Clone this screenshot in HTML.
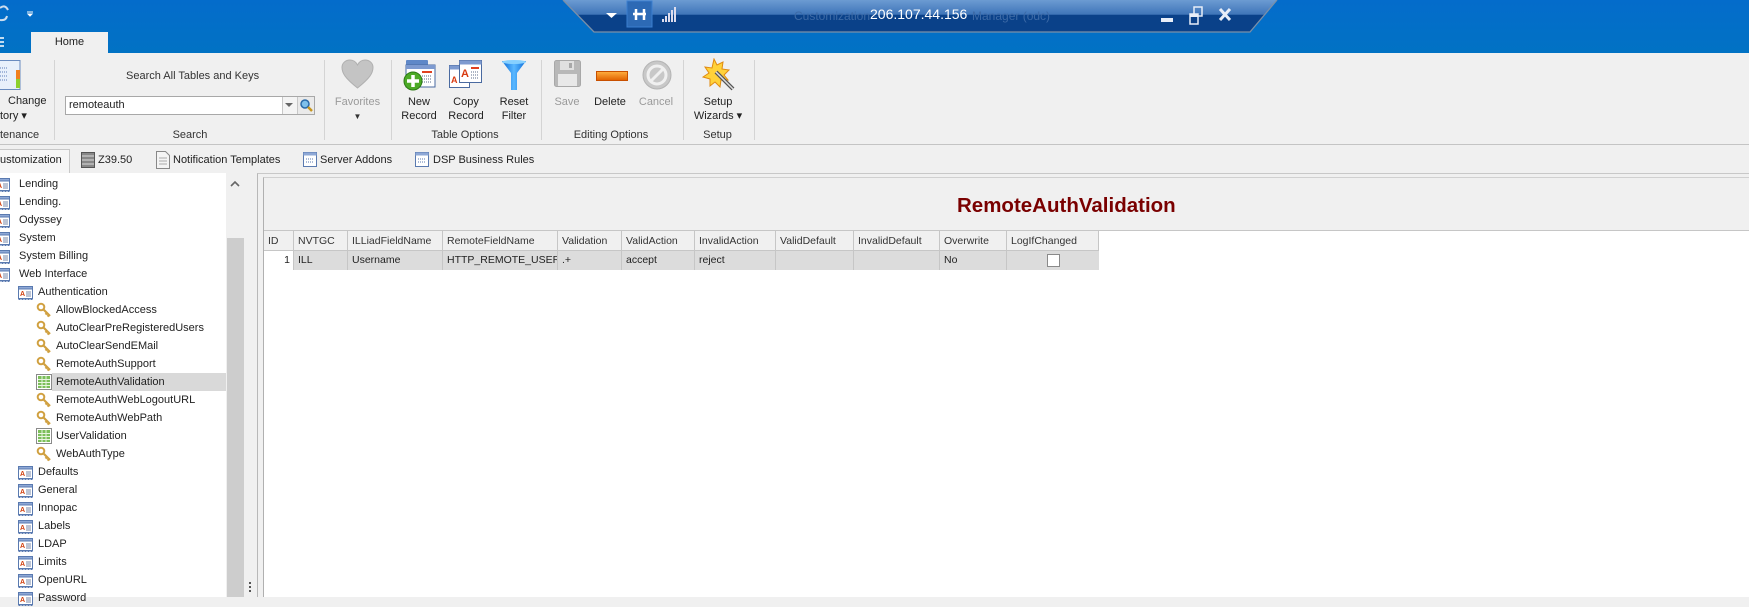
<!DOCTYPE html>
<html><head><meta charset="utf-8">
<style>
*{margin:0;padding:0;box-sizing:border-box}
body{width:1749px;height:597px;overflow:hidden;background:#f0f0f0;font-family:"Liberation Sans",Tahoma,sans-serif;font-size:11px;color:#222;position:relative}
.a{position:absolute;white-space:nowrap}
.sep{position:absolute;top:60px;width:1px;height:80px;background:#d4d4d4}
.gl{position:absolute;top:129px;font-size:11px;color:#333;text-align:center;white-space:nowrap}
.bt{position:absolute;top:95px;font-size:11px;line-height:14px;text-align:center;color:#222;white-space:nowrap}
.tr{position:absolute;height:18px;line-height:18px;font-size:11px;color:#222;white-space:nowrap;width:260px}
.tr svg{position:absolute;left:0;top:1px}
.tr span{position:absolute;top:0;white-space:nowrap}
.gh,.gr{position:absolute;height:20px;line-height:20px;font-size:10.5px;padding-left:4px;border-right:1px solid #c6c6c6;white-space:nowrap;overflow:hidden}
.gh{top:231px;background:#f0f0f0;border-bottom:1px solid #c6c6c6;color:#333}
.gr{top:251px;height:19px;line-height:19px;background:#dcdcdc;color:#222}
</style></head><body>
<svg width="0" height="0" style="position:absolute">
<defs>
<g id="fold">
<rect x="1.5" y="2.5" width="14" height="12" fill="#fff" stroke="#5a7ab0"/>
<rect x="1.5" y="2.5" width="14" height="2.5" fill="#8ea8d6" stroke="#5a7ab0"/>
<text x="3" y="12" font-size="7" font-family="Liberation Sans" font-weight="bold" fill="#d04010">A</text>
<path d="M9 8h5M9 10h5M9 12h5" stroke="#7a8aa8" stroke-width="1"/>
<path d="M1.5 15.5h14" stroke="#5a7ab0" stroke-dasharray="2 1"/>
</g>
<g id="key">
<circle cx="5" cy="5" r="3.3" fill="none" stroke="#d0a040" stroke-width="2"/>
<path d="M7.5 7.5L14 14M11 11l-1.5 1.5M13 13l-1.5 1.5" stroke="#d0a040" stroke-width="2.2" fill="none"/>
</g>
<g id="tbl">
<rect x="0.5" y="0.5" width="15" height="15" fill="#fff" stroke="#8a8a8a"/>
<rect x="2" y="2" width="12" height="12" fill="#7cbf5a"/>
<path d="M2 5.5h12M2 8.5h12M2 11.5h12M6 2v12M10 2v12" stroke="#e9f5e0" stroke-width="1"/>
</g>
</defs>
</svg>

<div class="a" style="left:0;top:0;width:1749px;height:53px;background:linear-gradient(#046ccb,#0172c4)"></div>
<svg class="a" style="left:0;top:0" width="1749" height="53">
<defs><linearGradient id="band" x1="0" y1="0" x2="0" y2="1"><stop offset="0" stop-color="#6c9bd2"/><stop offset="0.45" stop-color="#3f75b9"/><stop offset="0.47" stop-color="#0a4189"/><stop offset="1" stop-color="#0a4189"/></linearGradient></defs>
<path d="M563 0L594 32H1250L1277 0Z" fill="url(#band)"/>
<path d="M563 0L594 32H1250L1277 0" fill="none" stroke="#7a8fa8" stroke-width="1.3"/>
<path d="M606 13h11l-5.5 5z" fill="#fff"/>
<rect x="627" y="1" width="25" height="26" fill="#2d6ab5" stroke="#3b7fd0"/>
<path d="M633 14h13M636 9v11M644 9v11" stroke="#fff" stroke-width="2.5"/>
<g fill="#dde">
<rect x="662" y="19" width="2" height="3"/><rect x="665" y="16" width="2" height="6"/><rect x="668" y="13" width="2" height="9"/><rect x="671" y="10" width="2" height="12"/><rect x="674" y="7" width="2" height="15"/>
</g>
<rect x="1161" y="18" width="12" height="4" fill="#e8eef8"/>
<rect x="1190" y="14" width="8" height="10" fill="none" stroke="#e8eef8" stroke-width="1.5"/>
<rect x="1194" y="7" width="8" height="9" fill="none" stroke="#e8eef8" stroke-width="1.5"/>
<rect x="1190" y="14" width="8" height="3" fill="#e8eef8"/>
<path d="M1220 9l10 11M1230 9l-10 11" stroke="#e8eef8" stroke-width="3"/>
<path d="M0 8q5-4 8 2M0 20q6 1 7-4" stroke="#cde" stroke-width="2" fill="none"/>
<path d="M27 12h6M28 14h4l-2 2z" fill="#fff" stroke="#fff" stroke-width="1"/>
<path d="M0 38h4M0 42h4M0 46h4" stroke="#fff" stroke-width="1.6"/>
</svg>
<div class="a" style="left:794px;top:9px;font-size:12px;color:#3d6aa6">Customization -</div>
<div class="a" style="left:870px;top:6px;font-size:14px;color:#fff">206.107.44.156</div>
<div class="a" style="left:972px;top:9px;font-size:12px;color:#3d6aa6">Manager (odc)</div>
<div class="a" style="left:31px;top:32px;width:77px;height:21px;background:#f0f0f0;font-size:11px;line-height:21px;text-align:center;color:#222">Home</div>

<div class="a" style="left:0;top:144px;width:1749px;height:1px;background:#c4c4c4"></div>
<svg class="a" style="left:0;top:60px" width="25" height="30">
<rect x="-4" y="0.5" width="24" height="29" fill="#e8f0fb" stroke="#6a8cc0"/>
<path d="M0 8h8M0 12h8M0 16h8M0 20h8" stroke="#5c7cb8" stroke-dasharray="1 1"/>
<rect x="16" y="10" width="4" height="9" fill="#f08020"/><rect x="16" y="19" width="4" height="9" fill="#8cd030"/>
</svg>
<div class="a" style="left:8px;top:95px;font-size:11px">Change</div>
<div class="a" style="left:0;top:109px;font-size:11px">tory ▾</div>
<div class="gl" style="left:0">tenance</div>
<div class="sep" style="left:54px"></div>
<div class="a" style="left:126px;top:70px;color:#333">Search All Tables and Keys</div>
<div class="a" style="left:65px;top:96px;width:250px;height:19px;background:#fff;border:1px solid #a8a8a8"></div>
<div class="a" style="left:69px;top:99px;font-size:11px;color:#222">remoteauth</div>
<div class="a" style="left:282px;top:97px;width:15px;height:17px;background:#f4f4f4;border-left:1px solid #c8c8c8"></div>
<svg class="a" style="left:285px;top:103px" width="9" height="5"><path d="M0 0h8l-4 4z" fill="#666"/></svg>
<div class="a" style="left:297px;top:97px;width:17px;height:17px;background:#eaeaea;border-left:1px solid #c8c8c8"></div>
<svg class="a" style="left:299px;top:98px" width="15" height="15"><circle cx="6" cy="6" r="4" fill="#7fc0ea" stroke="#2a6aa8" stroke-width="1.5"/><path d="M9 9l4 4" stroke="#c8961e" stroke-width="2.5"/></svg>
<div class="gl" style="left:170px;width:40px">Search</div>
<div class="sep" style="left:324px"></div>
<svg class="a" style="left:341px;top:59px" width="33" height="31"><path d="M16.5 29C4 19 1 14 1 8.5 1 4 4.5 1 9 1c3.5 0 6 2 7.5 5C18 3 20.5 1 24 1c4.5 0 8 3 8 7.5 0 5.5-3 10.5-15.5 20.5z" fill="#c4c4c4" stroke="#b0b0b0"/></svg>
<div class="bt" style="left:330px;width:55px;color:#9a9a9a">Favorites<br><span style="font-size:8px;color:#333">▼</span></div>
<div class="sep" style="left:391px"></div>
<svg class="a" style="left:402px;top:59px" width="34" height="32">
<rect x="4" y="1" width="22" height="8" rx="1" fill="#5f88c8"/>
<rect x="4" y="6" width="29" height="22" fill="#fff" stroke="#4a6aa0"/>
<rect x="4" y="6" width="29" height="4" fill="#7d9ad0"/>
<rect x="20" y="12" width="10" height="2" fill="#e04020"/>
<path d="M20 17h10M20 20h10M20 23h10" stroke="#5a6a88" stroke-dasharray="1 1"/>
<circle cx="11" cy="22" r="9" fill="#4caa26" stroke="#2d7a14"/>
<path d="M11 16v12M5 22h12" stroke="#fff" stroke-width="3.5"/>
</svg>
<div class="bt" style="left:397px;width:44px">New<br>Record</div>
<svg class="a" style="left:449px;top:59px" width="34" height="32">
<rect x="0.5" y="6.5" width="20" height="22" fill="#fff" stroke="#4a6aa0"/>
<rect x="0.5" y="6.5" width="20" height="4" fill="#7d9ad0"/>
<rect x="10.5" y="1.5" width="22" height="22" fill="#fff" stroke="#4a6aa0"/>
<rect x="10.5" y="1.5" width="22" height="4" fill="#7d9ad0"/>
<text x="12" y="18" font-size="11" font-weight="bold" font-family="Liberation Sans" fill="#d83a10">A</text>
<text x="2" y="24" font-size="9" font-weight="bold" font-family="Liberation Sans" fill="#d83a10">A</text>
<rect x="22" y="8" width="8" height="2" fill="#e04020"/>
<path d="M22 13h8M22 16h8M22 19h8" stroke="#5a6a88" stroke-dasharray="1 1"/>
</svg>
<div class="bt" style="left:444px;width:44px">Copy<br>Record</div>
<svg class="a" style="left:501px;top:59px" width="26" height="32"><defs><linearGradient id="fn" x1="0" x2="1"><stop offset="0" stop-color="#0a6ad8"/><stop offset="0.5" stop-color="#5ab8ff"/><stop offset="1" stop-color="#0a6ad8"/></linearGradient></defs><path d="M1 2h24L16 14v17h-6V14z" fill="url(#fn)"/><ellipse cx="13" cy="3" rx="12" ry="2" fill="#86d0ff"/></svg>
<div class="bt" style="left:492px;width:44px">Reset<br>Filter</div>
<div class="gl" style="left:430px;width:70px">Table Options</div>
<div class="sep" style="left:541px"></div>
<svg class="a" style="left:554px;top:60px" width="27" height="28"><rect x="0.5" y="0.5" width="26" height="26" rx="2" fill="#b8b8b8" stroke="#a8a8a8"/><rect x="6" y="1" width="14" height="9" fill="#e0e0e0"/><rect x="15" y="3" width="3" height="5" fill="#a8a8a8"/><rect x="4" y="14" width="19" height="12" fill="#e8e8e8"/></svg>
<div class="bt" style="left:545px;width:44px;color:#9a9a9a">Save</div>
<svg class="a" style="left:596px;top:71px" width="32" height="10"><defs><linearGradient id="dl" x1="0" y1="0" x2="0" y2="1"><stop offset="0" stop-color="#ffb040"/><stop offset="1" stop-color="#e06000"/></linearGradient></defs><rect x="0.5" y="0.5" width="31" height="9" fill="url(#dl)" stroke="#c85000"/></svg>
<div class="bt" style="left:588px;width:44px">Delete</div>
<svg class="a" style="left:641px;top:59px" width="32" height="32"><circle cx="16" cy="16" r="14" fill="#c8c8c8" stroke="#b4b4b4"/><circle cx="16" cy="16" r="9" fill="none" stroke="#f0f0f0" stroke-width="3"/><path d="M10 22L22 10" stroke="#f0f0f0" stroke-width="3"/></svg>
<div class="bt" style="left:633px;width:46px;color:#9a9a9a">Cancel</div>
<div class="gl" style="left:571px;width:80px">Editing Options</div>
<div class="sep" style="left:683px"></div>
<svg class="a" style="left:702px;top:58px" width="34" height="34"><path d="M12 1l3 6 6-3-1 7 7 1-5 5 4 5-7 0-1 7-5-5-5 4 0-7-7-2 6-4-4-6 7 1z" fill="#ffd23a" stroke="#e08a10"/><path d="M14 14L31 31" stroke="#555" stroke-width="4"/><path d="M14 14L31 31" stroke="#ddd" stroke-width="1.5"/></svg>
<div class="bt" style="left:690px;width:56px">Setup<br>Wizards ▾</div>
<div class="gl" style="left:700px;width:35px">Setup</div>
<div class="sep" style="left:754px"></div>

<div class="a" style="left:0;top:149px;width:70px;height:25px;background:#f6f6f6;border:1px solid #c8c8c8;border-left:none;border-bottom:none"></div>
<div class="a" style="left:0;top:154px">ustomization</div>
<svg class="a" style="left:81px;top:152px" width="14" height="16"><rect x="0.5" y="0.5" width="13" height="15" fill="#888" stroke="#555"/><path d="M1 4h12M1 8h12M1 12h12" stroke="#ddd"/></svg>
<div class="a" style="left:98px;top:154px">Z39.50</div>
<svg class="a" style="left:156px;top:151px" width="14" height="18"><path d="M0.5 0.5h9l4 4v13h-13z" fill="#f4f4f4" stroke="#888"/><path d="M3 7h8M3 10h8M3 13h8" stroke="#aaa"/></svg>
<div class="a" style="left:173px;top:154px">Notification Templates</div>
<svg class="a" style="left:302px;top:151px" width="16" height="17"><rect x="1.5" y="1.5" width="13" height="14" fill="#fff" stroke="#5a7ab0"/><rect x="1.5" y="1.5" width="13" height="3" fill="#8ea8d6"/><path d="M4 8h8M4 11h8" stroke="#5a7ab0" stroke-dasharray="1 1"/></svg>
<div class="a" style="left:320px;top:154px">Server Addons</div>
<svg class="a" style="left:414px;top:151px" width="16" height="17"><rect x="1.5" y="1.5" width="13" height="14" fill="#fff" stroke="#5a7ab0"/><rect x="1.5" y="1.5" width="13" height="3" fill="#8ea8d6"/><path d="M4 8h8M4 11h8" stroke="#5a7ab0" stroke-dasharray="1 1"/></svg>
<div class="a" style="left:433px;top:154px">DSP Business Rules</div>

<div class="a" style="left:0;top:173px;width:226px;height:424px;background:#fff"></div>
<div class="a" style="left:52px;top:373px;width:174px;height:18px;background:#d9d9d9"></div>
<div class="tr" style="left:-6px;top:175px"><svg width="17" height="17"><use href="#fold"/></svg><span style="left:25px">Lending</span></div>
<div class="tr" style="left:-6px;top:193px"><svg width="17" height="17"><use href="#fold"/></svg><span style="left:25px">Lending.</span></div>
<div class="tr" style="left:-6px;top:211px"><svg width="17" height="17"><use href="#fold"/></svg><span style="left:25px">Odyssey</span></div>
<div class="tr" style="left:-6px;top:229px"><svg width="17" height="17"><use href="#fold"/></svg><span style="left:25px">System</span></div>
<div class="tr" style="left:-6px;top:247px"><svg width="17" height="17"><use href="#fold"/></svg><span style="left:25px">System Billing</span></div>
<div class="tr" style="left:-6px;top:265px"><svg width="17" height="17"><use href="#fold"/></svg><span style="left:25px">Web Interface</span></div>
<div class="tr" style="left:17px;top:283px"><svg width="17" height="17"><use href="#fold"/></svg><span style="left:21px">Authentication</span></div>
<div class="tr" style="left:36px;top:301px"><svg width="17" height="17"><use href="#key"/></svg><span style="left:20px">AllowBlockedAccess</span></div>
<div class="tr" style="left:36px;top:319px"><svg width="17" height="17"><use href="#key"/></svg><span style="left:20px">AutoClearPreRegisteredUsers</span></div>
<div class="tr" style="left:36px;top:337px"><svg width="17" height="17"><use href="#key"/></svg><span style="left:20px">AutoClearSendEMail</span></div>
<div class="tr" style="left:36px;top:355px"><svg width="17" height="17"><use href="#key"/></svg><span style="left:20px">RemoteAuthSupport</span></div>
<div class="tr" style="left:36px;top:373px"><svg width="17" height="17"><use href="#tbl"/></svg><span style="left:20px">RemoteAuthValidation</span></div>
<div class="tr" style="left:36px;top:391px"><svg width="17" height="17"><use href="#key"/></svg><span style="left:20px">RemoteAuthWebLogoutURL</span></div>
<div class="tr" style="left:36px;top:409px"><svg width="17" height="17"><use href="#key"/></svg><span style="left:20px">RemoteAuthWebPath</span></div>
<div class="tr" style="left:36px;top:427px"><svg width="17" height="17"><use href="#tbl"/></svg><span style="left:20px">UserValidation</span></div>
<div class="tr" style="left:36px;top:445px"><svg width="17" height="17"><use href="#key"/></svg><span style="left:20px">WebAuthType</span></div>
<div class="tr" style="left:17px;top:463px"><svg width="17" height="17"><use href="#fold"/></svg><span style="left:21px">Defaults</span></div>
<div class="tr" style="left:17px;top:481px"><svg width="17" height="17"><use href="#fold"/></svg><span style="left:21px">General</span></div>
<div class="tr" style="left:17px;top:499px"><svg width="17" height="17"><use href="#fold"/></svg><span style="left:21px">Innopac</span></div>
<div class="tr" style="left:17px;top:517px"><svg width="17" height="17"><use href="#fold"/></svg><span style="left:21px">Labels</span></div>
<div class="tr" style="left:17px;top:535px"><svg width="17" height="17"><use href="#fold"/></svg><span style="left:21px">LDAP</span></div>
<div class="tr" style="left:17px;top:553px"><svg width="17" height="17"><use href="#fold"/></svg><span style="left:21px">Limits</span></div>
<div class="tr" style="left:17px;top:571px"><svg width="17" height="17"><use href="#fold"/></svg><span style="left:21px">OpenURL</span></div>
<div class="tr" style="left:17px;top:589px"><svg width="17" height="17"><use href="#fold"/></svg><span style="left:21px">Password</span></div>
<div class="a" style="left:226px;top:173px;width:18px;height:424px;background:#f0f0f0"></div>
<div class="a" style="left:227px;top:238px;width:17px;height:359px;background:#cdcdcd"></div>
<svg class="a" style="left:230px;top:180px" width="10" height="7"><path d="M1 6l4-4 4 4" stroke="#666" stroke-width="1.6" fill="none"/></svg>
<div class="a" style="left:249px;top:586px;width:2px;height:2px;background:#555;box-shadow:0 4px 0 #555,0 -4px 0 #555"></div>

<div class="a" style="left:257px;top:173px;width:1492px;height:424px;border-left:1px solid #b8b8b8;border-top:1px solid #c8c8c8;background:#f0f0f0"></div>
<div class="a" style="left:263px;top:177px;width:1486px;height:420px;border-left:1px solid #b0b0b0;border-top:1px solid #d0d0d0;background:#f0f0f0"></div>
<div class="a" style="left:264px;top:231px;width:1485px;height:366px;background:#fff"></div>
<div class="a" style="left:264px;top:230px;width:1485px;height:1px;background:#c6c6c6"></div>
<div class="a" style="left:957px;top:194px;font-size:20.5px;font-weight:bold;color:#7a0000">RemoteAuthValidation</div>

<div class="gh" style="left:264px;width:30px">ID</div>
<div class="gh" style="left:294px;width:54px">NVTGC</div>
<div class="gh" style="left:348px;width:95px">ILLiadFieldName</div>
<div class="gh" style="left:443px;width:115px">RemoteFieldName</div>
<div class="gh" style="left:558px;width:64px">Validation</div>
<div class="gh" style="left:622px;width:73px">ValidAction</div>
<div class="gh" style="left:695px;width:81px">InvalidAction</div>
<div class="gh" style="left:776px;width:78px">ValidDefault</div>
<div class="gh" style="left:854px;width:86px">InvalidDefault</div>
<div class="gh" style="left:940px;width:67px">Overwrite</div>
<div class="gh" style="left:1007px;width:92px">LogIfChanged</div>

<div class="gr" style="left:264px;width:30px;background:#fff;text-align:right;padding-right:3px">1</div>
<div class="gr" style="left:294px;width:54px">ILL</div>
<div class="gr" style="left:348px;width:95px">Username</div>
<div class="gr" style="left:443px;width:115px">HTTP_REMOTE_USER</div>
<div class="gr" style="left:558px;width:64px">.+</div>
<div class="gr" style="left:622px;width:73px">accept</div>
<div class="gr" style="left:695px;width:81px">reject</div>
<div class="gr" style="left:776px;width:78px"></div>
<div class="gr" style="left:854px;width:86px"></div>
<div class="gr" style="left:940px;width:67px">No</div>
<div class="gr" style="left:1007px;width:92px;border-right:none"></div>
<div class="a" style="left:1047px;top:254px;width:13px;height:13px;background:#fff;border:1px solid #8a8a8a"></div>
</body></html>
